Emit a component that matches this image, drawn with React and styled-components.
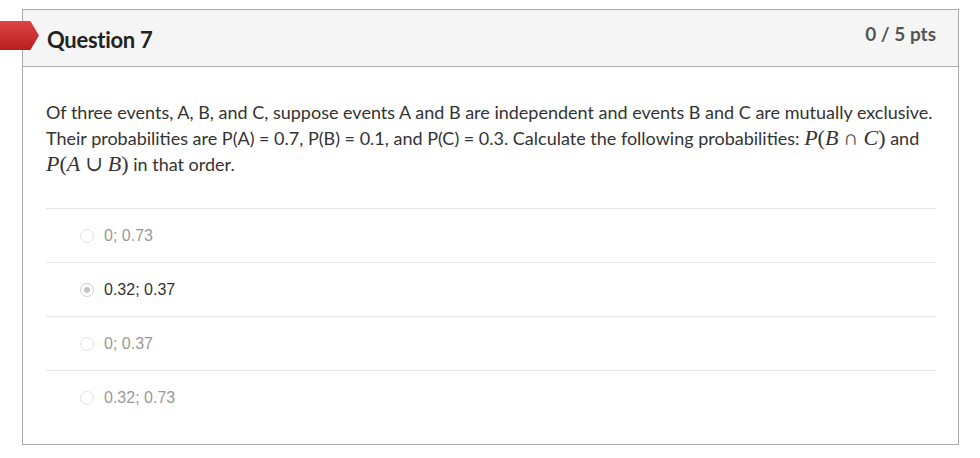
import React from 'react'
import styled, { createGlobalStyle } from 'styled-components'

const Global = createGlobalStyle`
body{
margin:0;
background:#fff;
font-family:Lato,"Liberation Sans",sans-serif;
}
`

const Page = styled.div`
width:980px;
height:458px;
padding:9px 21px 0 22px;
box-sizing:border-box;
position:relative;
`

const Card = styled.div`
border:1px solid #aaa;
background:#fff;
`

const Header = styled.div`
height:56px;
background:#f5f5f5;
border-bottom:1px solid #aaa;
display:flex;
justify-content:space-between;
align-items:flex-start;
padding:0 22px 0 24px;
`

const Title = styled.h2`
margin:16px 0 0;
font-size:22px;
font-weight:700;
color:#222;
letter-spacing:-0.3px;
`

const Points = styled.div`
margin-top:12px;
font-size:19px;
font-weight:700;
color:#555;
`

const Flag = styled.div`
position:absolute;
left:0;
top:21px;
width:39px;
height:29px;
background:linear-gradient(#e04444,#b81f1f);
clip-path:polygon(0 0,78% 0,100% 50%,78% 100%,0 100%);
`

const Body = styled.div`
padding:32px 22px 20px 23px;
`

const Text = styled.p`
margin:0;
padding-bottom:31px;
font-size:18px;
line-height:26px;
color:#333;
`

const Math = styled.span`
font-family:"Liberation Serif","DejaVu Serif",serif;
font-size:22px;
line-height:0;
white-space:nowrap;
i{font-style:italic;}
`

const Op = styled.span`
margin:0 5px;
font-size:21px;
`

const Answers = styled.div`
border-top:1px solid #e6e6e6;
`

const Row = styled.label`
display:flex;
align-items:center;
height:53px;
padding-left:34px;
border-bottom:1px solid #e6e6e6;
&:last-child{border-bottom:none;}
`

const Radio = styled.span`
width:14px;
height:14px;
border-radius:50%;
border:1px solid #e2e2e2;
background:#fff;
box-sizing:border-box;
margin-right:10px;
position:relative;
${p => p.checked && `
border-color:#d0d0d0;
&::after{
content:"";
position:absolute;
left:3px;top:3px;
width:6px;height:6px;
border-radius:50%;
background:#c4c4c4;
}
`}
`

const AnswerText = styled.span`
font-family:"Liberation Sans",Arial,sans-serif;
font-size:16px;
color:${p => (p.checked ? '#333' : '#999')};
`

const answers = ['0; 0.73', '0.32; 0.37', '0; 0.37', '0.32; 0.73']

export default function App() {
  return (
    <Page>
      <Global />
      <Flag />
      <Card>
        <Header>
          <Title>Question 7</Title>
          <Points>0 / 5 pts</Points>
        </Header>
        <Body>
          <Text>
            Of three events, A, B, and C, suppose events A and B are independent and events B and C are mutually exclusive.
            Their probabilities are P(A) = 0.7, P(B) = 0.1, and P(C) = 0.3. Calculate the following probabilities:{' '}
            <Math><i>P</i>(<i>B</i><Op>∩</Op><i>C</i>)</Math> and <Math><i>P</i>(<i>A</i><Op>∪</Op><i>B</i>)</Math> in that order.
          </Text>
          <Answers>
            {answers.map((a, i) => (
              <Row key={a}>
                <Radio checked={i === 1} />
                <AnswerText checked={i === 1}>{a}</AnswerText>
              </Row>
            ))}
          </Answers>
        </Body>
      </Card>
    </Page>
  )
}
